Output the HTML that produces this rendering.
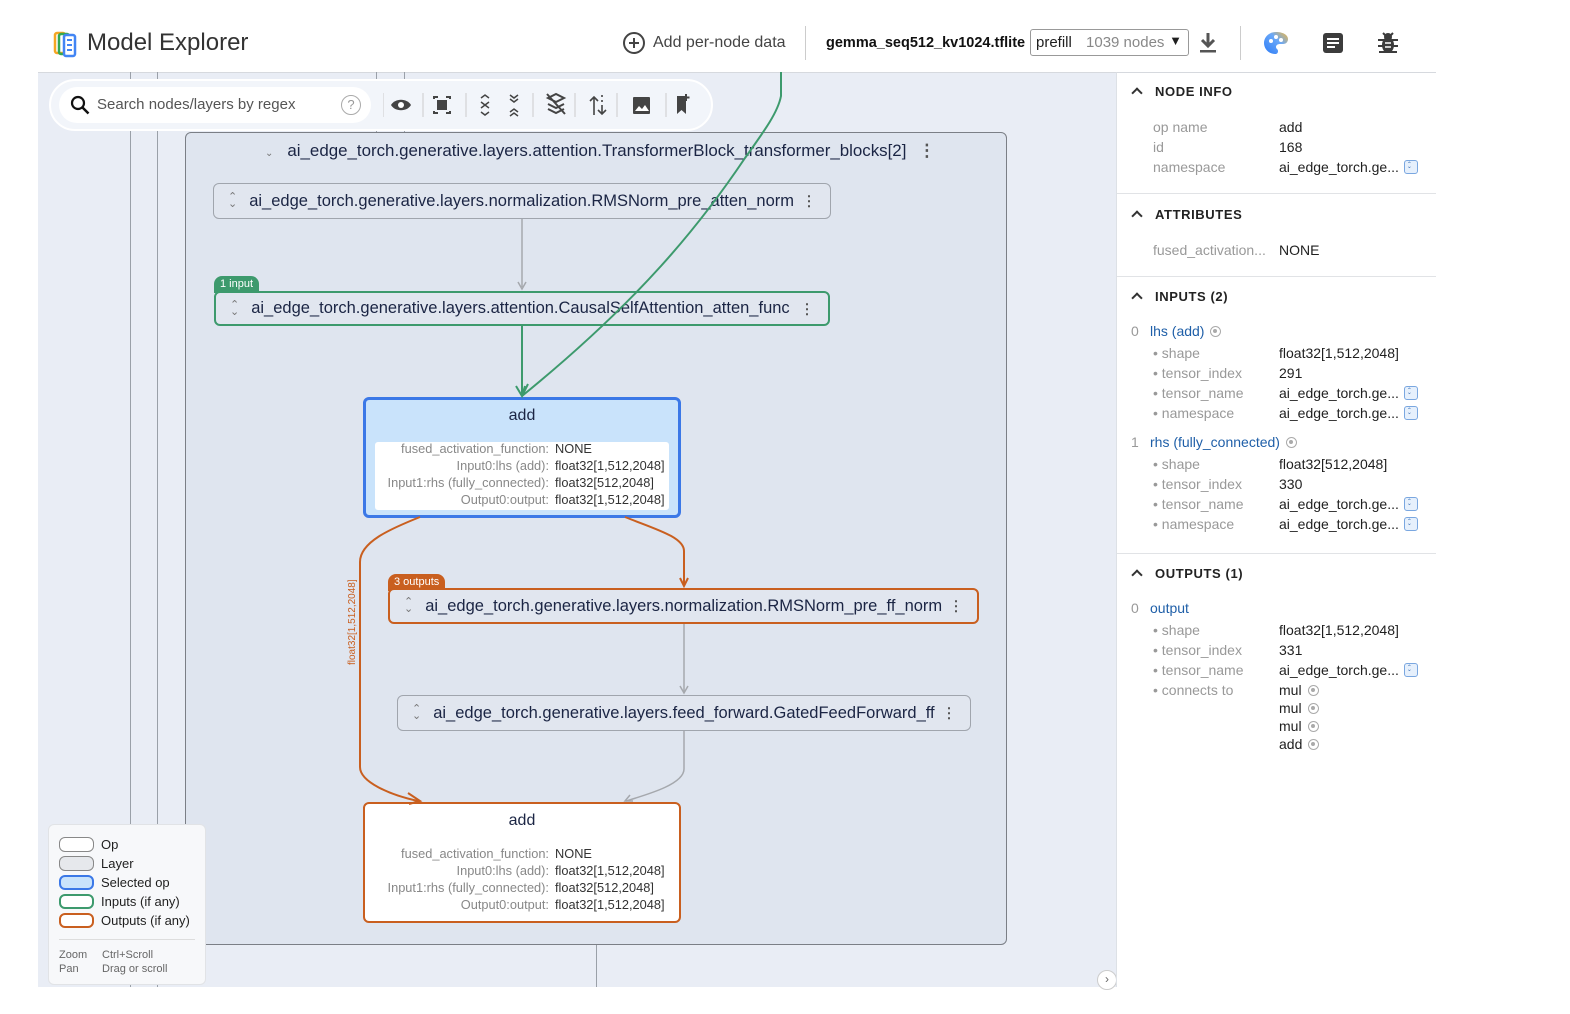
<!DOCTYPE html>
<html><head><meta charset="utf-8"><style>
*{box-sizing:border-box;margin:0;padding:0}
body{width:1570px;height:1014px;background:#fff;font-family:"Liberation Sans",sans-serif;position:relative;overflow:hidden;color:#1f1f1f}
.abs{position:absolute}
.graph{left:38px;top:72px;width:1078px;height:915px;background:#e9edf5;border-top:1px solid #d6d9de}
.side{left:1116px;top:72px;width:320px;height:915px;background:#fff;border-left:1px solid #dde1e6;border-top:1px solid #d6d9de}
.vl{position:absolute;width:1px;background:#9aa0a8}
.layer{position:absolute;border:1.5px solid #a0a5ad;border-radius:6px;background:#e1e6ef;font-size:16.5px;color:#1b2544;display:flex;align-items:center;padding-left:14px;white-space:nowrap}
.layer .ch{color:#777;font-size:11px;margin-right:12px;line-height:7px;text-align:center}
.layer .dots{position:absolute;right:14px;top:50%;transform:translateY(-50%);color:#555;font-size:14px;font-weight:bold}
.op{position:absolute;border-radius:6px;font-size:16px;color:#1b2544;text-align:center}
.attrs{position:absolute;font-size:12.8px;line-height:17px;white-space:nowrap}
.attrs .k{display:inline-block;text-align:right;color:#888;width:175px}
.attrs .v{color:#333;margin-left:6px}
.badge{position:absolute;color:#fff;font-size:11px;border-radius:8px 8px 0 0;padding:1px 6px;height:17px;line-height:15px}
.sec{position:absolute;left:1130px;font-size:13px;font-weight:bold;letter-spacing:.6px;color:#222}
.sec:before{content:"";display:inline-block;width:6px;height:6px;border-left:2px solid #333;border-top:2px solid #333;transform:rotate(45deg);margin:0 14px 0 3px;position:relative;top:1px}
.row{position:absolute;font-size:14px;white-space:nowrap}
.kk{color:#999}
.hr{position:absolute;left:1117px;width:319px;height:1px;background:#e1e3e6}
.bx{display:inline-block;width:14px;height:14px;border:1.5px solid #7aa7e0;border-radius:3px;background:#e6f0fc;vertical-align:-2px;margin-left:5px;position:relative}
.bx:after{content:"⌃⌄";position:absolute;font-size:6px;left:1px;top:0;color:#3a6fb5;letter-spacing:-5px;writing-mode:vertical-lr}
.tg{display:inline-block;width:11px;height:11px;border:1.5px solid #aaa;border-radius:50%;margin-left:6px;vertical-align:-1px;position:relative}
.tg:after{content:"";position:absolute;left:2px;top:2px;width:4px;height:4px;border-radius:50%;background:#aaa}
.blue{color:#1f5fa8}
.leg{display:flex;align-items:center;font-size:13px;height:19px}
.leg i{display:inline-block;width:35px;height:15px;border-radius:6px;margin-right:7px;border:2px solid}
</style></head><body>

<svg class="abs" style="left:53px;top:30px" width="26" height="28" viewBox="0 0 26 28">
<rect x="2" y="3" width="10" height="20" rx="2" fill="none" stroke="#f5a623" stroke-width="2.5"/>
<rect x="6" y="4" width="10" height="20" rx="2" fill="none" stroke="#34a853" stroke-width="2.5"/>
<rect x="11" y="5" width="11" height="21" rx="2" fill="#fff" stroke="#4285f4" stroke-width="2.5"/>
<path d="M14 10h5M14 15h5M14 20h5" stroke="#4285f4" stroke-width="2"/></svg>
<div class="abs" style="left:87px;top:29px;font-size:24px;color:#333">Model Explorer</div>
<svg class="abs" style="left:622px;top:31px" width="24" height="24" viewBox="0 0 24 24"><circle cx="12" cy="12" r="10" fill="none" stroke="#444" stroke-width="2"/><path d="M12 7v10M7 12h10" stroke="#444" stroke-width="2"/></svg>
<div class="abs" style="left:653px;top:34px;font-size:16px;color:#444">Add per-node data</div>
<div class="abs" style="left:805px;top:26px;width:1px;height:34px;background:#ccc"></div>
<div class="abs" style="left:826px;top:35px;font-size:14.5px;font-weight:bold;color:#111">gemma_seq512_kv1024.tflite</div>
<div class="abs" style="left:1030px;top:29px;width:159px;height:27px;border:1px solid #999;border-radius:3px;font-size:15px;padding:4px 5px;white-space:nowrap;background:#fff">prefill <span style="color:#888;margin-left:10px">1039 nodes</span><span style="position:absolute;right:6px;top:3px;font-size:13px">▼</span></div>
<svg class="abs" style="left:1197px;top:31px" width="22" height="24" viewBox="0 0 22 24"><path d="M11 2v12M5 9l6 6 6-6" stroke="#555" stroke-width="3" fill="none"/><rect x="3" y="19" width="16" height="2.5" fill="#555"/></svg>
<div class="abs" style="left:1240px;top:26px;width:1px;height:34px;background:#ccc"></div>
<svg class="abs" style="left:1263px;top:31px" width="26" height="24" viewBox="0 0 26 24"><defs><linearGradient id="g" x1="0" x2="1" y1="1" y2="0"><stop offset="0" stop-color="#2d7cf6"/><stop offset=".6" stop-color="#6aa8f8"/><stop offset="1" stop-color="#f6b93b"/></linearGradient></defs><path d="M13 1C6 1 1 6 1 12s5 11 11 11c2 0 3-1 3-3 0-2-2-2-2-4s2-3 4-3h3c3 0 5-2 5-5C25 4 20 1 13 1z" fill="url(#g)"/><circle cx="8" cy="10" r="2" fill="#fff"/><circle cx="13" cy="6" r="2" fill="#fff"/><circle cx="18" cy="9" r="2" fill="#fff"/></svg>
<svg class="abs" style="left:1322px;top:32px" width="22" height="22" viewBox="0 0 22 22"><rect x="1" y="1" width="20" height="20" rx="3" fill="#3c3c3c"/><path d="M5 7h12M5 11h12M5 15h8" stroke="#fff" stroke-width="2"/></svg>
<svg class="abs" style="left:1377px;top:31px" width="22" height="24" viewBox="0 0 22 24"><ellipse cx="11" cy="14" rx="6" ry="8" fill="#3c3c3c"/><circle cx="11" cy="6" r="4" fill="#3c3c3c"/><path d="M1 9h20M1 15h20M2 21h18M6 2l3 3M16 2l-3 3" stroke="#3c3c3c" stroke-width="2"/><path d="M8 12h6M8 16h6" stroke="#fff" stroke-width="1.6"/></svg>

<div class="abs graph"></div>
<div class="vl" style="left:130px;top:72px;height:915px"></div>
<div class="vl" style="left:157px;top:72px;height:915px"></div>
<div class="vl" style="left:376px;top:72px;height:62px"></div>
<div class="vl" style="left:404px;top:72px;height:62px"></div>
<div class="vl" style="left:596px;top:944px;height:43px"></div>

<div class="abs" style="left:49px;top:79px;width:664px;height:52px;border-radius:26px;background:#f2f5fa;border:2px solid #fff"></div>
<div class="abs" style="left:59px;top:87px;width:312px;height:36px;border-radius:18px;background:#fff"></div>
<svg class="abs" style="left:70px;top:95px" width="20" height="20" viewBox="0 0 20 20"><circle cx="8" cy="8" r="6" fill="none" stroke="#111" stroke-width="2.2"/><path d="M12.5 12.5l6 6" stroke="#111" stroke-width="2.5"/></svg>
<div class="abs" style="left:97px;top:96px;font-size:15px;color:#555">Search nodes/layers by regex</div>
<div class="abs" style="left:341px;top:95px;width:20px;height:20px;border:1.5px solid #aaa;border-radius:50%;color:#999;font-size:13px;text-align:center;line-height:17px">?</div>
<svg class="abs" style="left:383px;top:88px" width="320" height="34" viewBox="0 0 320 34">
<g fill="#444" stroke="#444">
<path d="M8 17c4-7 16-7 20 0c-4 7-16 7-20 0z" stroke="none"/><circle cx="18" cy="17" r="3" fill="#fff" stroke="none"/>
<line x1="0" y1="5" x2="0" y2="29" stroke="#ccc"/><line x1="40" y1="5" x2="40" y2="29" stroke="#ccc"/>
<path d="M51 11v-2h4M63 9h4v2M67 23v2h-4M55 25h-4v-2" fill="none" stroke-width="2"/><rect x="54" y="12" width="10" height="10" stroke="none"/>
<line x1="83" y1="5" x2="83" y2="29" stroke="#ccc"/>
<path d="M98 10l4-3 4 3M98 14l4 3 4-3M98 20l4-3 4 3M98 24l4 3 4-3" fill="none" stroke-width="1.5"/>
<path d="M127 7l4 3 4-3M127 11l4 3 4-3M127 24l4-3 4 3M127 28l4-3 4 3" fill="none" stroke-width="1.5"/>
<line x1="150" y1="5" x2="150" y2="29" stroke="#ccc"/>
<path d="M165 10l8-4 8 4-8 4zM165 16l8 4 8-4M165 21l8 4 8-4M164 6l18 20" fill="none" stroke-width="2"/>
<line x1="192" y1="5" x2="192" y2="29" stroke="#ccc"/>
<path d="M211 27V9M207 13l4-4 4 4M219 7v2M219 12v2M219 17v9M215 22l4 4 4-4" fill="none" stroke-width="1.6"/>
<line x1="234" y1="5" x2="234" y2="29" stroke="#ccc"/>
<rect x="250" y="9" width="17" height="17" rx="1" stroke="none"/><path d="M252 23l4-5 3 3 3-4 4 6z" fill="#fff" stroke="none"/>
<line x1="283" y1="5" x2="283" y2="29" stroke="#ccc"/>
<path d="M294 8h9v18l-4.5-4-4.5 4z" stroke="none"/><path d="M303 6v7M299.5 9.5h7" stroke="#444" stroke-width="2"/>
</g></svg>

<div class="abs" style="left:185px;top:132px;width:822px;height:813px;border:1.5px solid #7b7f86;border-radius:6px;background:#dfe5ef"></div>
<div class="abs" style="left:265px;top:140px;font-size:16.9px;color:#1b2544;white-space:nowrap"><span style="color:#777;font-size:10px;margin-right:14px">⌄</span>ai_edge_torch.generative.layers.attention.TransformerBlock_transformer_blocks[2]<span style="margin-left:12px;color:#555;font-weight:bold">⋮</span></div>

<div class="layer" style="left:213px;top:183px;width:618px;height:36px"><span class="ch">⌃<br>⌄</span>ai_edge_torch.generative.layers.normalization.RMSNorm_pre_atten_norm<span class="dots">⋮</span></div>
<div class="badge" style="left:214px;top:276px;background:#3d9a6d">1 input</div>
<div class="layer" style="left:214px;top:291px;width:616px;height:35px;border:2px solid #3d9a6d"><span class="ch">⌃<br>⌄</span>ai_edge_torch.generative.layers.attention.CausalSelfAttention_atten_func<span class="dots">⋮</span></div>

<div class="badge" style="left:388px;top:574px;background:#c95f1f">3 outputs</div>
<div class="layer" style="left:388px;top:588px;width:591px;height:36px;border:2px solid #c95f1f"><span class="ch">⌃<br>⌄</span>ai_edge_torch.generative.layers.normalization.RMSNorm_pre_ff_norm<span class="dots">⋮</span></div>
<div class="layer" style="left:397px;top:695px;width:574px;height:36px"><span class="ch">⌃<br>⌄</span>ai_edge_torch.generative.layers.feed_forward.GatedFeedForward_ff<span class="dots">⋮</span></div>

<div class="op" style="left:363px;top:397px;width:318px;height:121px;background:#c9e3fb;border:3px solid #3b78e7">
<div style="margin-top:7px">add</div>
<div style="position:absolute;left:9px;top:42px;width:294px;height:68px;background:#fff;border-radius:3px"></div>
</div>
<div class="attrs" style="left:374px;top:440px">
<div><span class="k">fused_activation_function:</span><span class="v">NONE</span></div>
<div><span class="k">Input0:lhs (add):</span><span class="v">float32[1,512,2048]</span></div>
<div><span class="k">Input1:rhs (fully_connected):</span><span class="v">float32[512,2048]</span></div>
<div><span class="k">Output0:output:</span><span class="v">float32[1,512,2048]</span></div>
</div>
<div class="op" style="left:363px;top:802px;width:318px;height:121px;background:#fff;border:2px solid #c95f1f">
<div style="margin-top:8px">add</div></div>
<div class="attrs" style="left:374px;top:845px">
<div><span class="k">fused_activation_function:</span><span class="v">NONE</span></div>
<div><span class="k">Input0:lhs (add):</span><span class="v">float32[1,512,2048]</span></div>
<div><span class="k">Input1:rhs (fully_connected):</span><span class="v">float32[512,2048]</span></div>
<div><span class="k">Output0:output:</span><span class="v">float32[1,512,2048]</span></div>
</div>

<svg class="abs" style="left:0;top:0" width="1116" height="1000" viewBox="0 0 1116 1000">
<g fill="none" stroke-width="1.5">
<path d="M522 219V287" stroke="#a5a8ad"/><path d="M518 282l4 7 4-7" stroke="#a5a8ad"/>
<path d="M522 326V394" stroke="#3d9a6d" stroke-width="2"/>
<path d="M781 72V96C778 112 765 130 745 158C700 225 640 300 522 396" stroke="#3d9a6d" stroke-width="2"/>
<path d="M516 386l6 10 3-10M528 384l-6 12" stroke="#3d9a6d" stroke-width="2"/>
<path d="M420 517c-30 12-60 25-60 45v205c0 15 30 28 58 34" stroke="#c95f1f" stroke-width="2"/>
<path d="M408 793l12 8-11 3" stroke="#c95f1f" stroke-width="2"/>
<path d="M625 517c30 12 59 20 59 34v35" stroke="#c95f1f" stroke-width="2"/>
<path d="M680 578l4 8 4-8" stroke="#c95f1f" stroke-width="2"/>
<path d="M684 624V692" stroke="#a5a8ad"/><path d="M680 686l4 7 4-7" stroke="#a5a8ad"/>
<path d="M684 731v38c0 15-35 25-58 32" stroke="#a5a8ad"/><path d="M630 795l-5 6 8 0" stroke="#a5a8ad"/>
</g>
<text x="0" y="0" transform="translate(355 665) rotate(-90)" font-size="10" fill="#c95f1f" font-family="Liberation Sans">float32[1,512,2048]</text>
</svg>

<div class="abs" style="left:48px;top:824px;width:158px;height:161px;background:#f7f8fa;border:1px solid #e1e3e6;border-radius:6px;padding:10px 10px">
<div class="leg"><i style="border-color:#888;background:#fff;border-width:1.2px"></i>Op</div>
<div class="leg"><i style="border-color:#888;background:#e6e8ec;border-width:1.2px"></i>Layer</div>
<div class="leg"><i style="border-color:#3b78e7;background:#c9e3fb"></i>Selected op</div>
<div class="leg"><i style="border-color:#3d9a6d;background:#fff"></i>Inputs (if any)</div>
<div class="leg"><i style="border-color:#c95f1f;background:#fff"></i>Outputs (if any)</div>
<div style="border-top:1px solid #ddd;margin-top:9px;padding-top:8px;font-size:11px;color:#666;line-height:14px">
<div><span style="display:inline-block;width:43px">Zoom</span>Ctrl+Scroll</div>
<div><span style="display:inline-block;width:43px">Pan</span>Drag or scroll</div></div>
</div>
<div class="abs" style="left:1097px;top:970px;width:20px;height:20px;border-radius:50%;background:#fff;border:1px solid #ccc;font-size:12px;color:#666;text-align:center;line-height:17px">›</div>

<div class="abs side"></div>
<div class="sec" style="top:84px">NODE INFO</div>
<div class="row kk" style="left:1153px;top:119px">op name</div><div class="row" style="left:1279px;top:119px">add</div>
<div class="row kk" style="left:1153px;top:139px">id</div><div class="row" style="left:1279px;top:139px">168</div>
<div class="row kk" style="left:1153px;top:159px">namespace</div><div class="row" style="left:1279px;top:159px">ai_edge_torch.ge...<span class="bx"></span></div>
<div class="hr" style="top:193px"></div>
<div class="sec" style="top:207px">ATTRIBUTES</div>
<div class="row kk" style="left:1153px;top:242px">fused_activation...</div><div class="row" style="left:1279px;top:242px">NONE</div>
<div class="hr" style="top:276px"></div>
<div class="sec" style="top:289px">INPUTS (2)</div>
<div class="row kk" style="left:1131px;top:323px">0</div><div class="row blue" style="left:1150px;top:323px">lhs (add)<span class="tg"></span></div>
<div class="row kk" style="left:1153px;top:345px">• shape</div><div class="row" style="left:1279px;top:345px">float32[1,512,2048]</div>
<div class="row kk" style="left:1153px;top:365px">• tensor_index</div><div class="row" style="left:1279px;top:365px">291</div>
<div class="row kk" style="left:1153px;top:385px">• tensor_name</div><div class="row" style="left:1279px;top:385px">ai_edge_torch.ge...<span class="bx"></span></div>
<div class="row kk" style="left:1153px;top:405px">• namespace</div><div class="row" style="left:1279px;top:405px">ai_edge_torch.ge...<span class="bx"></span></div>
<div class="row kk" style="left:1131px;top:434px">1</div><div class="row blue" style="left:1150px;top:434px">rhs (fully_connected)<span class="tg"></span></div>
<div class="row kk" style="left:1153px;top:456px">• shape</div><div class="row" style="left:1279px;top:456px">float32[512,2048]</div>
<div class="row kk" style="left:1153px;top:476px">• tensor_index</div><div class="row" style="left:1279px;top:476px">330</div>
<div class="row kk" style="left:1153px;top:496px">• tensor_name</div><div class="row" style="left:1279px;top:496px">ai_edge_torch.ge...<span class="bx"></span></div>
<div class="row kk" style="left:1153px;top:516px">• namespace</div><div class="row" style="left:1279px;top:516px">ai_edge_torch.ge...<span class="bx"></span></div>
<div class="hr" style="top:553px"></div>
<div class="sec" style="top:566px">OUTPUTS (1)</div>
<div class="row kk" style="left:1131px;top:600px">0</div><div class="row blue" style="left:1150px;top:600px">output</div>
<div class="row kk" style="left:1153px;top:622px">• shape</div><div class="row" style="left:1279px;top:622px">float32[1,512,2048]</div>
<div class="row kk" style="left:1153px;top:642px">• tensor_index</div><div class="row" style="left:1279px;top:642px">331</div>
<div class="row kk" style="left:1153px;top:662px">• tensor_name</div><div class="row" style="left:1279px;top:662px">ai_edge_torch.ge...<span class="bx"></span></div>
<div class="row kk" style="left:1153px;top:682px">• connects to</div>
<div class="row" style="left:1279px;top:682px">mul<span class="tg"></span></div>
<div class="row" style="left:1279px;top:700px">mul<span class="tg"></span></div>
<div class="row" style="left:1279px;top:718px">mul<span class="tg"></span></div>
<div class="row" style="left:1279px;top:736px">add<span class="tg"></span></div>
</body></html>
